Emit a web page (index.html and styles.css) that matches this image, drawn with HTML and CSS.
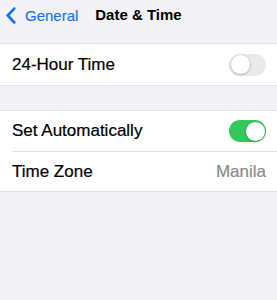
FILE: index.html
```html
<!DOCTYPE html>
<html>
<head>
<meta charset="utf-8">
<link rel="stylesheet" href="styles.css">
</head>
<body>
<header class="nav">
  <a class="back">
    <svg class="chev" width="10" height="17" viewBox="0 0 10 17"><path d="M8.2 1.6 L1.8 8.5 L8.2 15.4" fill="none" stroke="#1473e6" stroke-width="2.7" stroke-linecap="round" stroke-linejoin="round"/></svg>
    <span>General</span>
  </a>
  <h1 class="title">Date &amp; Time</h1>
  <span></span>
</header>
<section class="group first">
  <div class="row">
    <span class="label">24-Hour Time</span>
    <span class="switch"><span class="knob"></span></span>
  </div>
</section>
<section class="group second">
  <div class="row">
    <span class="label">Set Automatically</span>
    <span class="switch on"><span class="knob"></span></span>
  </div>
  <div class="row">
    <span class="label">Time Zone</span>
    <span class="value">Manila</span>
  </div>
</section>
</body>
</html>
```
FILE: styles.css
```css
* { box-sizing: border-box; }
body {
  margin: 0;
  background: #f2f2f7;
  font-family: "Liberation Sans", Arial, sans-serif;
  color: #000;
}
.nav {
  height: 43px;
  padding-top: 4px;
  display: grid;
  grid-template-columns: 1fr auto 1fr;
  align-items: start;
}
.back {
  display: flex;
  align-items: center;
  height: 22px;
  padding-left: 6px;
  color: #1473e6;
  font-size: 15px;
  gap: 9px;
  -webkit-text-stroke: 0.15px #1473e6;
}
.chev { display: block; }
.title {
  margin: 0;
  height: 22px;
  line-height: 22px;
  font-size: 15px;
  font-weight: bold;
}
.group {
  background: #fff;
  border-top: 1px solid #e2e2e6;
  border-bottom: 1px solid #e2e2e6;
  padding-left: 12px;
}
.second { margin-top: 24px; }
.row {
  display: flex;
  align-items: center;
  justify-content: space-between;
  height: 41px;
  padding-right: 11px;
  font-size: 17px;
  -webkit-text-stroke: 0.2px currentColor;
}
.second .row { height: 40px; }
.row + .row { border-top: 1px solid #e2e2e6; }
.value { color: #8a8a8e; }
.switch {
  width: 37px;
  height: 22px;
  border-radius: 11px;
  background: #e9e9eb;
  padding: 1.5px;
  display: flex;
}
.switch.on {
  background: #34c759;
  justify-content: flex-end;
}
.knob {
  width: 19px;
  height: 19px;
  border-radius: 50%;
  background: #fff;
  box-shadow: 0 1px 3px rgba(0,0,0,0.22), 0 0 0 0.5px rgba(0,0,0,0.06);
}
```
